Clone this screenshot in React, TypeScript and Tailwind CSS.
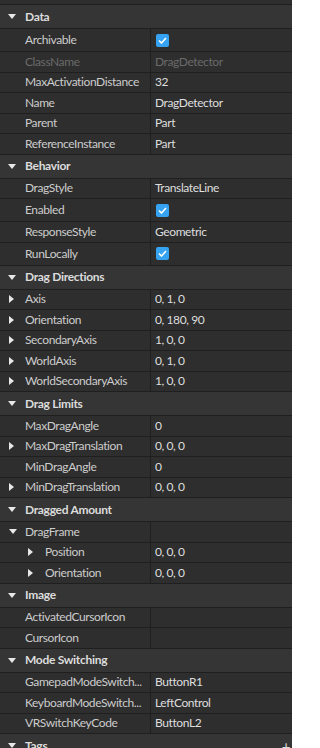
import React from "react";

type Row = {
  label: string;
  value?: string;
  check?: boolean;
  expand?: "right" | "down";
  indent?: boolean;
  disabled?: boolean;
};

type Section = { title: string; rows: Row[] };

const sections: Section[] = [
  {
    title: "Data",
    rows: [
      { label: "Archivable", check: true },
      { label: "ClassName", value: "DragDetector", disabled: true },
      { label: "MaxActivationDistance", value: "32" },
      { label: "Name", value: "DragDetector" },
      { label: "Parent", value: "Part" },
      { label: "ReferenceInstance", value: "Part" },
    ],
  },
  {
    title: "Behavior",
    rows: [
      { label: "DragStyle", value: "TranslateLine" },
      { label: "Enabled", check: true },
      { label: "ResponseStyle", value: "Geometric" },
      { label: "RunLocally", check: true },
    ],
  },
  {
    title: "Drag Directions",
    rows: [
      { label: "Axis", value: "0, 1, 0", expand: "right" },
      { label: "Orientation", value: "0, 180, 90", expand: "right" },
      { label: "SecondaryAxis", value: "1, 0, 0", expand: "right" },
      { label: "WorldAxis", value: "0, 1, 0", expand: "right" },
      { label: "WorldSecondaryAxis", value: "1, 0, 0", expand: "right" },
    ],
  },
  {
    title: "Drag Limits",
    rows: [
      { label: "MaxDragAngle", value: "0" },
      { label: "MaxDragTranslation", value: "0, 0, 0", expand: "right" },
      { label: "MinDragAngle", value: "0" },
      { label: "MinDragTranslation", value: "0, 0, 0", expand: "right" },
    ],
  },
  {
    title: "Dragged Amount",
    rows: [
      { label: "DragFrame", value: "", expand: "down" },
      { label: "Position", value: "0, 0, 0", expand: "right", indent: true },
      { label: "Orientation", value: "0, 0, 0", expand: "right", indent: true },
    ],
  },
  {
    title: "Image",
    rows: [
      { label: "ActivatedCursorIcon", value: "" },
      { label: "CursorIcon", value: "" },
    ],
  },
  {
    title: "Mode Switching",
    rows: [
      { label: "GamepadModeSwitch...", value: "ButtonR1" },
      { label: "KeyboardModeSwitch...", value: "LeftControl" },
      { label: "VRSwitchKeyCode", value: "ButtonL2" },
    ],
  },
];

const DownTri = () => (
  <svg width="8" height="5" viewBox="0 0 8 5" className="shrink-0">
    <polygon points="0,0 8,0 4,5" fill="#e8e8e8" />
  </svg>
);

const RightTri = () => (
  <svg width="5" height="8" viewBox="0 0 5 8" className="shrink-0">
    <polygon points="0,0 5,4 0,8" fill="#e8e8e8" />
  </svg>
);

const CheckBox = () => (
  <div className="w-[13px] h-[13px] rounded-[2px] bg-[#35a2f2] flex items-center justify-center">
    <svg width="9" height="7" viewBox="0 0 9 7">
      <path d="M1 3.5 L3.5 6 L8 1" stroke="#ffffff" strokeWidth="1.6" fill="none" />
    </svg>
  </div>
);

const Header = ({ title, plus }: { title: string; plus?: boolean }) => (
  <div className="h-[24px] bg-[#353535] border-b border-[#1f1f1f] flex items-center">
    <div className="w-[25px] pl-[8px] flex items-center">
      <DownTri />
    </div>
    <span className="font-bold text-[#dcdcdc] tracking-[-0.3px]">{title}</span>
    {plus && <span className="ml-auto mr-[2px] text-[#dcdcdc] text-[15px]">+</span>}
  </div>
);

const PropRow = ({ row }: { row: Row }) => {
  const tall = row.check;
  return (
    <div
      className={`${tall ? "h-[23px]" : "h-[20.5px]"} flex border-b border-[#1f1f1f] bg-[#2e2e2e]`}
    >
      <div className="w-[151px] shrink-0 border-r border-[#1f1f1f] flex items-center">
        <div className={`${row.indent ? "w-[45px] pl-[28px]" : "w-[25px] pl-[9px]"} shrink-0 flex items-center`}>
          {row.expand === "right" && <RightTri />}
          {row.expand === "down" && <DownTri />}
        </div>
        <span
          className={`whitespace-nowrap ${row.disabled ? "text-[#6a6a6a]" : "text-[#cccccc]"}`}
        >
          {row.label}
        </span>
      </div>
      <div className="flex-1 flex items-center pl-[4px]">
        {row.check ? (
          <div className="pl-[1px]">
            <CheckBox />
          </div>
        ) : (
          <span className={row.disabled ? "text-[#6a6a6a]" : "text-[#dedede]"}>{row.value}</span>
        )}
      </div>
    </div>
  );
};

export default function App() {
  return (
    <div
      className="w-[292px] h-[748px] overflow-hidden bg-[#2e2e2e] text-[12px] leading-[14px] tracking-[-0.4px]"
      style={{ fontFamily: "Lato, 'Noto Sans', sans-serif" }}
    >
      <div className="h-[5px] border-b border-[#1f1f1f]" />
      {sections.map((s) => (
        <div key={s.title}>
          <Header title={s.title} />
          {s.rows.map((r) => (
            <PropRow key={s.title + r.label} row={r} />
          ))}
        </div>
      ))}
      <Header title="Tags" plus />
    </div>
  );
}
